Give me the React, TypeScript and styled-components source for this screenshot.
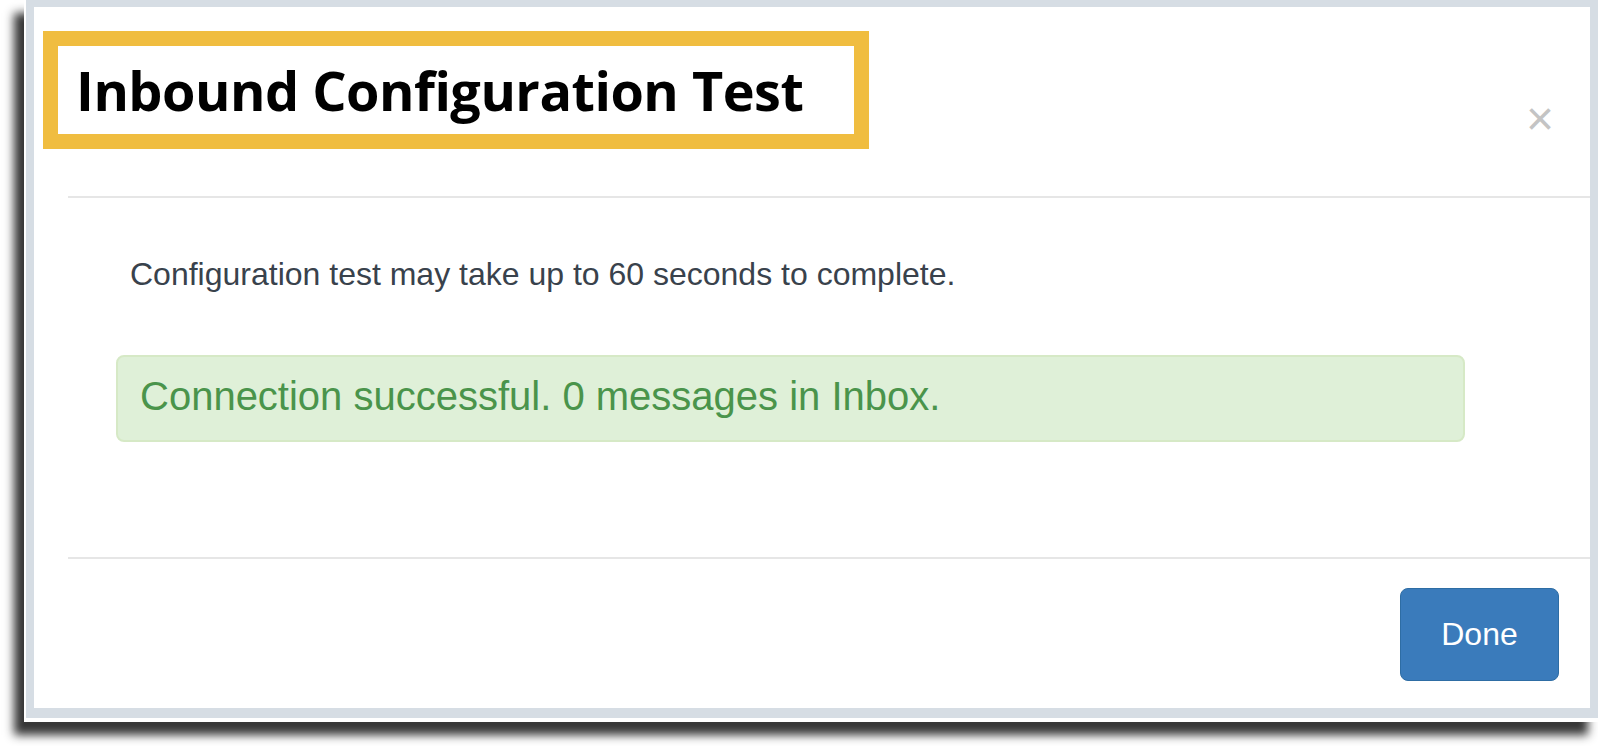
import styled, { createGlobalStyle } from 'styled-components'

const GlobalStyle = createGlobalStyle`
  html, body {
    margin: 0;
    padding: 0;
    background: #ffffff;
    overflow: hidden;
  }
  body {
    width: 1598px;
    height: 746px;
    font-family: "Liberation Sans", Arial, sans-serif;
  }
`

const App = () => {
  return (
    <>
      <GlobalStyle />
      <StyledFrame>
        <StyledModal>
          <StyledHeader>
            <StyledTitleBox>
              <StyledTitle>Inbound Configuration Test</StyledTitle>
            </StyledTitleBox>
            <StyledClose aria-label="Close">×</StyledClose>
          </StyledHeader>
          <StyledDivider $top={47} />
          <StyledBody>
            <StyledText>Configuration test may take up to 60 seconds to complete.</StyledText>
            <StyledAlert>Connection successful. 0 messages in Inbox.</StyledAlert>
          </StyledBody>
          <StyledDivider $top={0} />
          <StyledFooter>
            <StyledButton>Done</StyledButton>
          </StyledFooter>
        </StyledModal>
      </StyledFrame>
    </>
  )
}

export default App

const StyledFrame = styled.div`
  margin-left: 24px;
  width: 1574px;
  height: 722px;
  box-sizing: border-box;
  padding: 0 0 4px 2px;
  background: #ffffff;
  box-shadow: -10px 13px 9px rgba(20, 20, 20, 0.85);
`
const StyledModal = styled.div`
  height: 100%;
  box-sizing: border-box;
  border: 8px solid #d6dde4;
  border-top-width: 7px;
  border-bottom-width: 10px;
  background: #ffffff;
  display: flex;
  flex-direction: column;
`
const StyledHeader = styled.div`
  display: flex;
  justify-content: space-between;
  align-items: flex-start;
  padding: 24px 36px 0 9px;
`
const StyledTitleBox = styled.div`
  border: 15px solid #f0bd40;
  padding: 0 51px 0 18px;
  height: 88px;
  display: flex;
  align-items: center;
`
const StyledTitle = styled.h1`
  margin: 0;
  font-family: "Open Sans", sans-serif;
  font-weight: 700;
  font-size: 54px;
  letter-spacing: -0.5px;
  color: #000000;
`
const StyledClose = styled.button`
  margin-top: 64px;
  padding: 0;
  border: 0;
  background: none;
  font-family: "Liberation Sans", Arial, sans-serif;
  font-size: 48px;
  line-height: 1;
  color: #c4c4c4;
`
const StyledDivider = styled.div<{ $top: number }>`
  margin-left: 34px;
  margin-top: ${(p) => p.$top}px;
  height: 2px;
  background: #e6e6e6;
`
const StyledBody = styled.div`
  padding: 57px 125px 115px 82px;
  display: flex;
  flex-direction: column;
  gap: 62px;
`
const StyledText = styled.p`
  margin: 0 0 0 14px;
  font-size: 32px;
  line-height: 38px;
  color: #39424c;
`
const StyledAlert = styled.div`
  height: 87px;
  box-sizing: border-box;
  padding: 0 22px 4px;
  display: flex;
  align-items: center;
  background: #dff0d8;
  border: 2px solid #d6e9c6;
  border-radius: 8px;
  font-size: 40px;
  color: #4a944b;
`
const StyledFooter = styled.div`
  display: flex;
  justify-content: flex-end;
  padding: 29px 31px 0 0;
`
const StyledButton = styled.button`
  width: 159px;
  height: 93px;
  border: 1px solid #2e6da4;
  border-radius: 8px;
  background: #3a7bbb;
  color: #ffffff;
  font-family: "Liberation Sans", Arial, sans-serif;
  font-size: 32px;
`
